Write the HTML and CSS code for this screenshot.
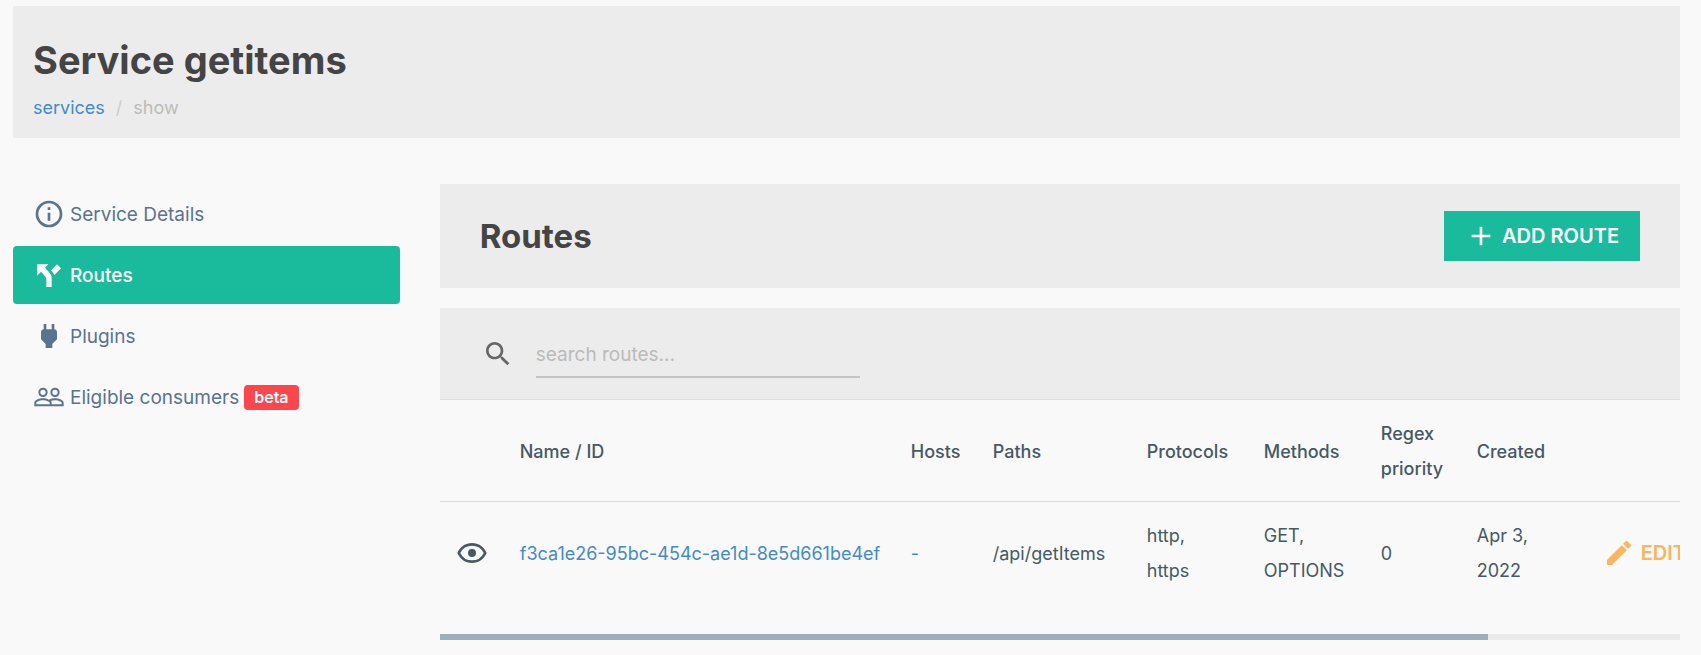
FILE: index.html
```html
<!DOCTYPE html>
<html lang="en">
<head>
    <meta charset="UTF-8">
    <meta name="viewport" content="width=device-width, initial-scale=1.0">
    <title>Service getitems</title>
    <link rel="stylesheet" href="styles.css">
</head>
<body>
    <header class="page-header">
        <h1 class="page-title">Service getitems</h1>
        <nav class="breadcrumb">
            <a href="#services">services</a>
            <span class="separator">/</span>
            <span class="current">show</span>
        </nav>
    </header>

    <div class="content">
        <nav class="sidebar">
            <a class="nav-item" href="#details">
                <svg class="icon" viewBox="0 0 24 24"><path d="M11 9h2V7h-2m1 13a8 8 0 1 1 0-16 8 8 0 0 1 0 16m0-18a10 10 0 1 0 0 20 10 10 0 0 0 0-20m-1 15h2v-6h-2v6z"/></svg>
                Service Details
            </a>
            <a class="nav-item active" href="#routes">
                <svg class="icon" viewBox="0 0 24 24"><path d="M3 4v8.500l3-3L9 13c1 1 1 2 1 2v6h4v-7s0-1-.53-2S12 10 12 10L9 6.580 11.500 4M18 4l-4.460 4.470L14 9s.93 1 1.470 2c.21.4.33.79.4 1.130L21 7"/></svg>
                Routes
            </a>
            <a class="nav-item" href="#plugins">
                <svg class="icon" viewBox="0 0 24 24"><path d="M16 7V3h-2v4h-4V3H8v4C7 7 6 8 6 9v5.500L9.500 18v3h5v-3l3.500-3.500V9c0-1-1-2-2-2z"/></svg>
                Plugins
            </a>
            <a class="nav-item" href="#consumers">
                <svg class="icon" viewBox="0 0 24 24"><path fill-rule="evenodd" d="M16.500 13c-1.200 0-3.070.34-4.500 1-1.430-.67-3.300-1-4.500-1C5.330 13 1 14.080 1 16.250V19h22v-2.750c0-2.170-4.330-3.250-6.500-3.250zm-4 4.500h-10v-1.250c0-.54 2.560-1.750 5-1.750s5 1.210 5 1.750v1.250zm9 0H14v-1.250c0-.46-.2-.86-.52-1.220.88-.3 1.960-.53 3.020-.53 2.440 0 5 1.210 5 1.750v1.250zM7.500 12a3.500 3.500 0 1 0 0-7 3.500 3.500 0 0 0 0 7zm0-5.500a2 2 0 1 1 0 4 2 2 0 0 1 0-4zM16.500 12a3.500 3.500 0 1 0 0-7 3.500 3.500 0 0 0 0 7zm0-5.500a2 2 0 1 1 0 4 2 2 0 0 1 0-4z"/></svg>
                Eligible consumers
                <span class="badge">beta</span>
            </a>
        </nav>

        <main class="main">
            <div class="panel-header">
                <h2 class="panel-title">Routes</h2>
                <button class="add-btn" type="button">
                    <svg class="icon" viewBox="0 0 24 24"><path d="M19 13h-6v6h-2v-6H5v-2h6V5h2v6h6v2z"/></svg>
                    ADD ROUTE
                </button>
            </div>

            <div class="search-bar">
                <label for="route-search" aria-label="Search routes">
                    <svg class="icon" viewBox="0 0 24 24"><path d="M15.500 14h-.79l-.28-.27C15.410 12.590 16 11.110 16 9.500 16 5.910 13.090 3 9.500 3S3 5.910 3 9.500 5.910 16 9.500 16c1.610 0 3.090-.59 4.230-1.570l.27.280v.79l5 4.990L20.490 19l-4.990-5zm-6 0C7.010 14 5 11.990 5 9.500S7.010 5 9.500 5 14 7.010 14 9.500 11.990 14 9.500 14z"/></svg>
                </label>
                <input class="search-input" id="route-search" type="text" placeholder="search routes...">
            </div>

            <div class="table-scroll" id="table-scroll">
                <table class="routes">
                    <colgroup>
                        <col class="col-view">
                        <col class="col-name">
                        <col class="col-hosts">
                        <col class="col-paths">
                        <col class="col-list">
                        <col class="col-list">
                        <col class="col-regex">
                        <col class="col-created">
                        <col class="col-action">
                        <col class="col-action">
                    </colgroup>
                    <thead>
                        <tr>
                            <th></th>
                            <th>Name / ID</th>
                            <th>Hosts</th>
                            <th>Paths</th>
                            <th>Protocols</th>
                            <th>Methods</th>
                            <th>Regex priority</th>
                            <th>Created</th>
                            <th></th>
                            <th></th>
                        </tr>
                    </thead>
                    <tbody>
                        <tr>
                            <td>
                                <button class="icon-btn" type="button" aria-label="View route">
                                    <svg class="icon" viewBox="0 0 24 24"><path d="M12 9a3 3 0 1 1 0 6 3 3 0 0 1 0-6m0-4.500c5 0 9.270 3.110 11 7.500-1.730 4.390-6 7.500-11 7.500S2.730 16.390 1 12c1.730-4.390 6-7.500 11-7.500M3.180 12a9.820 9.820 0 0 0 17.640 0 9.820 9.820 0 0 0-17.640 0z"/></svg>
                                </button>
                            </td>
                            <td><a class="route-id" href="#route">f3ca1e26-95bc-454c-ae1d-8e5d661be4ef</a></td>
                            <td class="hosts">-</td>
                            <td>/api/getItems</td>
                            <td>http, https</td>
                            <td>GET, OPTIONS</td>
                            <td>0</td>
                            <td>Apr 3, 2022</td>
                            <td>
                                <button class="action-btn edit" type="button">
                                    <svg class="icon" viewBox="0 0 24 24"><path d="M20.710 7.040c.39-.39.39-1.040 0-1.410l-2.340-2.340c-.37-.39-1.020-.39-1.410 0l-1.840 1.830 3.750 3.750M3 17.250V21h3.750L17.810 9.930l-3.750-3.750L3 17.250z"/></svg>
                                    EDIT
                                </button>
                            </td>
                            <td></td>
                        </tr>
                    </tbody>
                </table>
            </div>
            <div class="scroll-track">
                <div class="scroll-thumb" id="scroll-thumb"></div>
            </div>
        </main>
    </div>

    <script>
        const tableScroll = document.getElementById('table-scroll');
        const thumb = document.getElementById('scroll-thumb');

        // Keep the thumb in step with the table's scroll position
        function updateThumb() {
            const total = tableScroll.scrollWidth;
            thumb.style.width = (tableScroll.clientWidth / total * 100) + '%';
            thumb.style.marginLeft = (tableScroll.scrollLeft / total * 100) + '%';
        }

        tableScroll.addEventListener('scroll', updateThumb);
        window.addEventListener('resize', updateThumb);
        updateThumb();
    </script>
</body>
</html>
```
FILE: styles.css
```css
* {
    box-sizing: border-box;
}

body {
    margin: 0;
    padding: 6px 21px 14px 13px;
    font-family: 'Inter', sans-serif;
    font-size: 18px;
    line-height: 35px;
    color: #455a64;
    background: #f9f9f9;
}

a {
    color: #428bca;
    text-decoration: none;
}

button {
    font: inherit;
    border: none;
    cursor: pointer;
}

.icon {
    width: 32px;
    height: 32px;
    flex: none;
    display: block;
    fill: currentColor;
}

/* Page header */
.page-header {
    padding: 30px 20px 13px;
    background: #ececec;
}

.page-title {
    margin: 0;
    font-size: 38px;
    line-height: 48px;
    font-weight: 700;
    color: #444;
}

.breadcrumb {
    display: flex;
    gap: 11px;
    padding-top: 6px;
}

.breadcrumb .separator {
    color: #ccc;
}

.breadcrumb .current {
    color: #bbb;
}

/* Layout */
.content {
    display: grid;
    grid-template-columns: repeat(12, 1fr);
    gap: 40px;
    margin-top: 46px;
}

.sidebar {
    grid-column: span 3;
    display: flex;
    flex-direction: column;
    gap: 3px;
    padding-top: 1px;
}

.main {
    grid-column: span 9;
    min-width: 0;
}

/* Sidebar */
.nav-item {
    display: flex;
    align-items: center;
    gap: 5px;
    height: 58px;
    padding: 0 20px;
    border-radius: 4px;
    font-size: 19px;
    color: #5a7391;
}

.nav-item.active {
    color: #fff;
    font-weight: 500;
    background: #1abb9c;
}

.badge {
    padding: 0 10px;
    border-radius: 4px;
    font-size: 16px;
    line-height: 25px;
    font-weight: 600;
    color: #fff;
    background: #fb474b;
}

/* Routes panel */
.panel-header {
    display: flex;
    align-items: center;
    justify-content: space-between;
    height: 104px;
    padding: 0 40px;
    background: #ececec;
}

.panel-title {
    margin: 0;
    font-size: 33px;
    font-weight: 700;
    color: #444;
}

.add-btn {
    display: flex;
    align-items: center;
    gap: 5px;
    height: 50px;
    padding: 0 21px;
    font-size: 20px;
    font-weight: 600;
    color: #fff;
    background: #1abb9c;
}

.search-bar {
    display: flex;
    align-items: center;
    gap: 22px;
    height: 92px;
    margin-top: 20px;
    padding: 0 42px;
    color: #666;
    background: #ececec;
    border-bottom: 1px solid #ddd;
}

.search-input {
    width: 324px;
    height: 48px;
    padding: 4px 0 0;
    font: inherit;
    font-size: 19px;
    color: #555;
    background: transparent;
    border: none;
    border-bottom: 2px solid #c4c4c4;
    outline: none;
}

.search-input::placeholder {
    color: #bbb;
}

/* Table */
.table-scroll {
    overflow-x: auto;
    padding-bottom: 30px;
    scrollbar-width: none;
}

.scroll-track {
    height: 6px;
    background: #eaeaea;
}

.scroll-thumb {
    height: 100%;
    background: #9bb0ba;
}

.routes {
    width: 1467px;
    table-layout: fixed;
    border-collapse: collapse;
}

.routes th,
.routes td {
    padding: 16px;
    text-align: left;
    vertical-align: middle;
}

.routes th {
    padding-bottom: 15px;
    font-weight: 500;
    border-bottom: 1px solid #ddd;
}

.col-view { width: 64px; }
.col-name { width: 391px; }
.col-hosts { width: 82px; }
.col-paths { width: 154px; }
.col-list { width: 117px; }
.col-regex { width: 96px; }
.col-created { width: 110px; }

.route-id {
    white-space: nowrap;
}

.hosts {
    color: #428bca;
}

.icon-btn {
    display: block;
    padding: 0;
    color: inherit;
    background: none;
}

.action-btn {
    display: flex;
    align-items: center;
    gap: 6px;
    padding: 0 16px;
    font-size: 20px;
    font-weight: 600;
    background: none;
}

.action-btn.edit {
    color: #ffb45b;
}
```
